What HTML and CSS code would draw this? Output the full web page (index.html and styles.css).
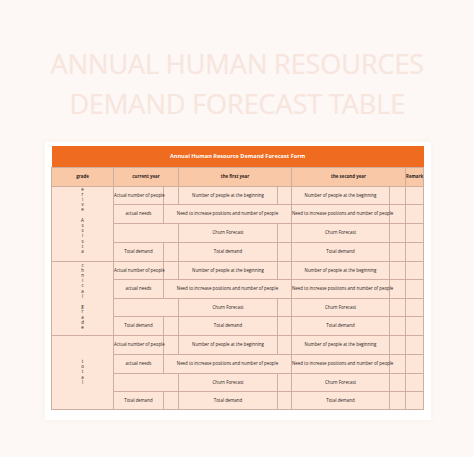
FILE: index.html
```html
<!DOCTYPE html>
<html>
<head>
<meta charset="utf-8">
<link rel="stylesheet" href="styles.css">
</head>
<body>
<div class="page">
  <h1 class="hero">ANNUAL HUMAN RESOURCES<br>DEMAND FORECAST TABLE</h1>
  <div class="sheet">
    <table class="grid">
      <colgroup>
        <col class="w-grade"><col class="w-c1"><col class="w-c2"><col class="w-c3"><col class="w-c4"><col class="w-c5"><col class="w-c6"><col class="w-c7">
      </colgroup>
      <tr class="title"><td colspan="8">Annual Human Resource Demand Forecast Form</td></tr>
      <tr class="head">
        <td>grade</td>
        <td colspan="2">current year</td>
        <td colspan="2">the first year</td>
        <td colspan="2">the second year</td>
        <td class="remark">Remark</td>
      </tr>

      <tr class="r-a">
        <td rowspan="4" class="grade g1"><div class="vert">e
r
i
v
e

A
s
s
i
s
t
a</div></td>
        <td>Actual number of people</td><td></td>
        <td>Number of people at the beginning</td><td></td>
        <td>Number of people at the beginning</td><td></td><td></td>
      </tr>
      <tr class="r-b">
        <td>actual needs</td>
        <td colspan="3">Need to increase positions and number of people</td>
        <td>Need to increase positions and number of people</td><td></td><td></td>
      </tr>
      <tr class="r-b">
        <td colspan="2"></td>
        <td>Churn Forecast</td><td></td>
        <td>Churn Forecast</td><td></td><td></td>
      </tr>
      <tr class="r-b">
        <td>Total demand</td><td></td>
        <td>Total demand</td><td></td>
        <td>Total demand</td><td></td><td></td>
      </tr>

      <tr class="r-a">
        <td rowspan="4" class="grade g2"><div class="vert">c
h
n
i
c
a
l

g
r
a
d
e</div></td>
        <td>Actual number of people</td><td></td>
        <td>Number of people at the beginning</td><td></td>
        <td>Number of people at the beginning</td><td></td><td></td>
      </tr>
      <tr class="r-b">
        <td>actual needs</td>
        <td colspan="3">Need to increase positions and number of people</td>
        <td>Need to increase positions and number of people</td><td></td><td></td>
      </tr>
      <tr class="r-a">
        <td colspan="2"></td>
        <td>Churn Forecast</td><td></td>
        <td>Churn Forecast</td><td></td><td></td>
      </tr>
      <tr class="r-b">
        <td>Total demand</td><td></td>
        <td>Total demand</td><td></td>
        <td>Total demand</td><td></td><td></td>
      </tr>

      <tr class="r-b">
        <td rowspan="4" class="grade g3"><div class="vert">t
o
t
a
l</div></td>
        <td>Actual number of people</td><td></td>
        <td>Number of people at the beginning</td><td></td>
        <td>Number of people at the beginning</td><td></td><td></td>
      </tr>
      <tr class="r-b">
        <td>actual needs</td>
        <td colspan="3">Need to increase positions and number of people</td>
        <td>Need to increase positions and number of people</td><td></td><td></td>
      </tr>
      <tr class="r-a">
        <td colspan="2"></td>
        <td>Churn Forecast</td><td></td>
        <td>Churn Forecast</td><td></td><td></td>
      </tr>
      <tr class="r-a">
        <td>Total demand</td><td></td>
        <td>Total demand</td><td></td>
        <td>Total demand</td><td></td><td></td>
      </tr>
    </table>
  </div>
</div>
</body>
</html>
```

FILE: styles.css
```css
html, body {
  margin: 0;
  padding: 0;
}
body {
  background: #fdf8f5;
  font-family: "Open Sans", "Noto Sans", sans-serif;
}
.page {
  width: 474px;
  height: 457px;
  overflow: hidden;
}
.hero {
  margin: 0;
  padding-top: 44px;
  font-family: "Noto Sans", "Open Sans", sans-serif;
  font-weight: 400;
  font-size: 27.5px;
  line-height: 40px;
  color: #f7e5de;
  text-align: center;
  letter-spacing: -0.45px;
}
.sheet {
  margin: 18px 0 0 45px;
  width: 372px;
  padding: 4px 8px 10px 6px;
  background: #ffffff;
  box-shadow: 0 0 5px rgba(180, 140, 120, 0.08);
}
.grid {
  width: 372px;
  table-layout: fixed;
  border-collapse: collapse;
  font-size: 4.4px;
  color: #2a2420;
}
.w-grade { width: 62px; }
.w-c1 { width: 50px; }
.w-c2 { width: 15px; }
.w-c3 { width: 99px; }
.w-c4 { width: 14px; }
.w-c5 { width: 98px; }
.w-c6 { width: 16px; }
.w-c7 { width: 18px; }

.grid td {
  padding: 0;
  border: 1px solid #cfae9f;
  background: #fde5d8;
  text-align: center;
  vertical-align: middle;
  white-space: nowrap;
  overflow: visible;
  line-height: 5px;
}
.title { height: 21px; }
.title td {
  background: #ee6b1f;
  border: none;
  color: #ffffff;
  font-weight: 700;
  font-size: 5.6px;
  line-height: 7px;
}
.head { height: 19px; }
.head td {
  background: #f9c8a7;
  font-weight: 700;
  color: #2e221c;
}
.head .remark {
  text-align: left;
  padding-left: 0;
}
.r-a { height: 18px; }
.r-b { height: 19px; }

.grid td.grade {
  vertical-align: top;
  padding: 0;
}
.vert {
  white-space: pre-line;
  line-height: 5.2px;
  font-size: 4.4px;
  color: #221c18;
}
.g1 .vert { padding-top: 0; }
.g2 .vert { padding-top: 1px; }
.grid td.g3 { vertical-align: middle; }
```
